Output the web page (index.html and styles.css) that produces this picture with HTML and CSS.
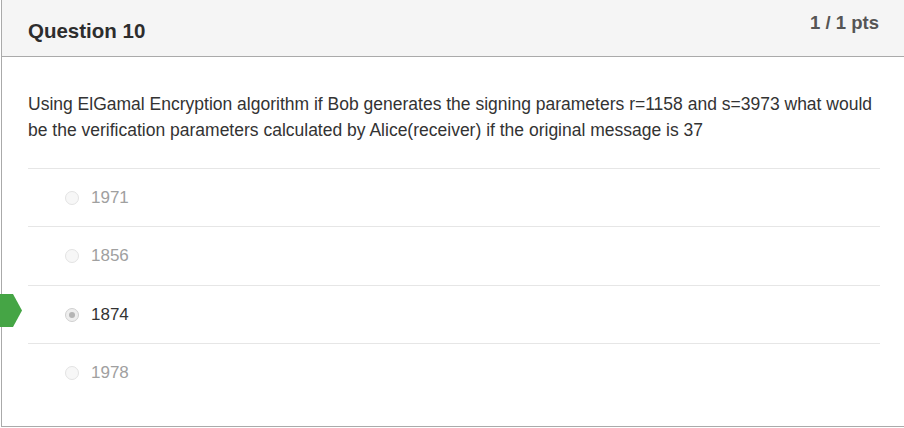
FILE: index.html
```html
<!DOCTYPE html>
<html>
<head>
<meta charset="utf-8">
<link rel="stylesheet" href="styles.css">
</head>
<body>
<div class="question">
  <div class="header">
    <div class="title">Question 10</div>
    <div class="pts">1 / 1 pts</div>
  </div>
  <div class="body">
    <p class="text">Using ElGamal Encryption algorithm if Bob generates the signing parameters r=1158 and s=3973 what would be the verification parameters calculated by Alice(receiver) if the original message is 37</p>
    <div class="answers">
      <div class="answer"><span class="radio"></span><span class="label">1971</span></div>
      <div class="answer tall"><span class="radio"></span><span class="label">1856</span></div>
      <div class="answer selected"><span class="marker"></span><span class="radio"><span class="dot"></span></span><span class="label">1874</span></div>
      <div class="answer"><span class="radio"></span><span class="label">1978</span></div>
    </div>
  </div>
</div>
</body>
</html>
```
FILE: styles.css
```css
html, body {
  margin: 0;
  padding: 0;
  background: #fff;
}
body {
  font-family: "Liberation Sans", Arial, sans-serif;
  color: #333;
}
.question {
  margin-left: 1px;
  border-left: 1px solid #aaa;
  border-bottom: 1px solid #aaa;
  height: 427px;
  box-sizing: border-box;
  position: relative;
}
.header {
  height: 56px;
  background: #f5f5f5;
  border-bottom: 1px solid #aaa;
  display: flex;
  justify-content: space-between;
  padding: 0 25px 0 26px;
}
.title {
  font-weight: bold;
  font-size: 20.5px;
  color: #2d2d2d;
  margin-top: 19px;
  line-height: 24px;
}
.pts {
  font-weight: bold;
  font-size: 18.5px;
  color: #555;
  margin-top: 11px;
  line-height: 24px;
}
.body {
  padding: 0 24px 0 26px;
}
.text {
  margin: 34px 0 25px;
  font-size: 17.5px;
  line-height: 26px;
  color: #333;
}
.answer {
  border-top: 1px solid #e6e6e6;
  height: 57px;
  display: flex;
  align-items: center;
  padding-left: 37px;
  font-size: 17px;
  color: #a0a0a0;
}
.answer.tall {
  height: 58px;
}
.answer.selected {
  color: #333;
}
.radio {
  width: 14px;
  height: 14px;
  border-radius: 50%;
  border: 1px solid #e3e3e3;
  background: #f7f7f7;
  box-sizing: border-box;
  display: flex;
  align-items: center;
  justify-content: center;
  margin-right: 12px;
}
.selected .radio {
  border-color: #d0d0d0;
  background: #eee;
}
.dot {
  width: 6px;
  height: 6px;
  border-radius: 50%;
  background: #b5b5b5;
}
.label {
  line-height: 20px;
}
.marker {
  position: absolute;
  left: -2px;
  top: 294px;
  width: 22px;
  height: 33px;
  background: #45a545;
  clip-path: polygon(0 0, 13px 0, 22px 50%, 13px 100%, 0 100%);
}
```
